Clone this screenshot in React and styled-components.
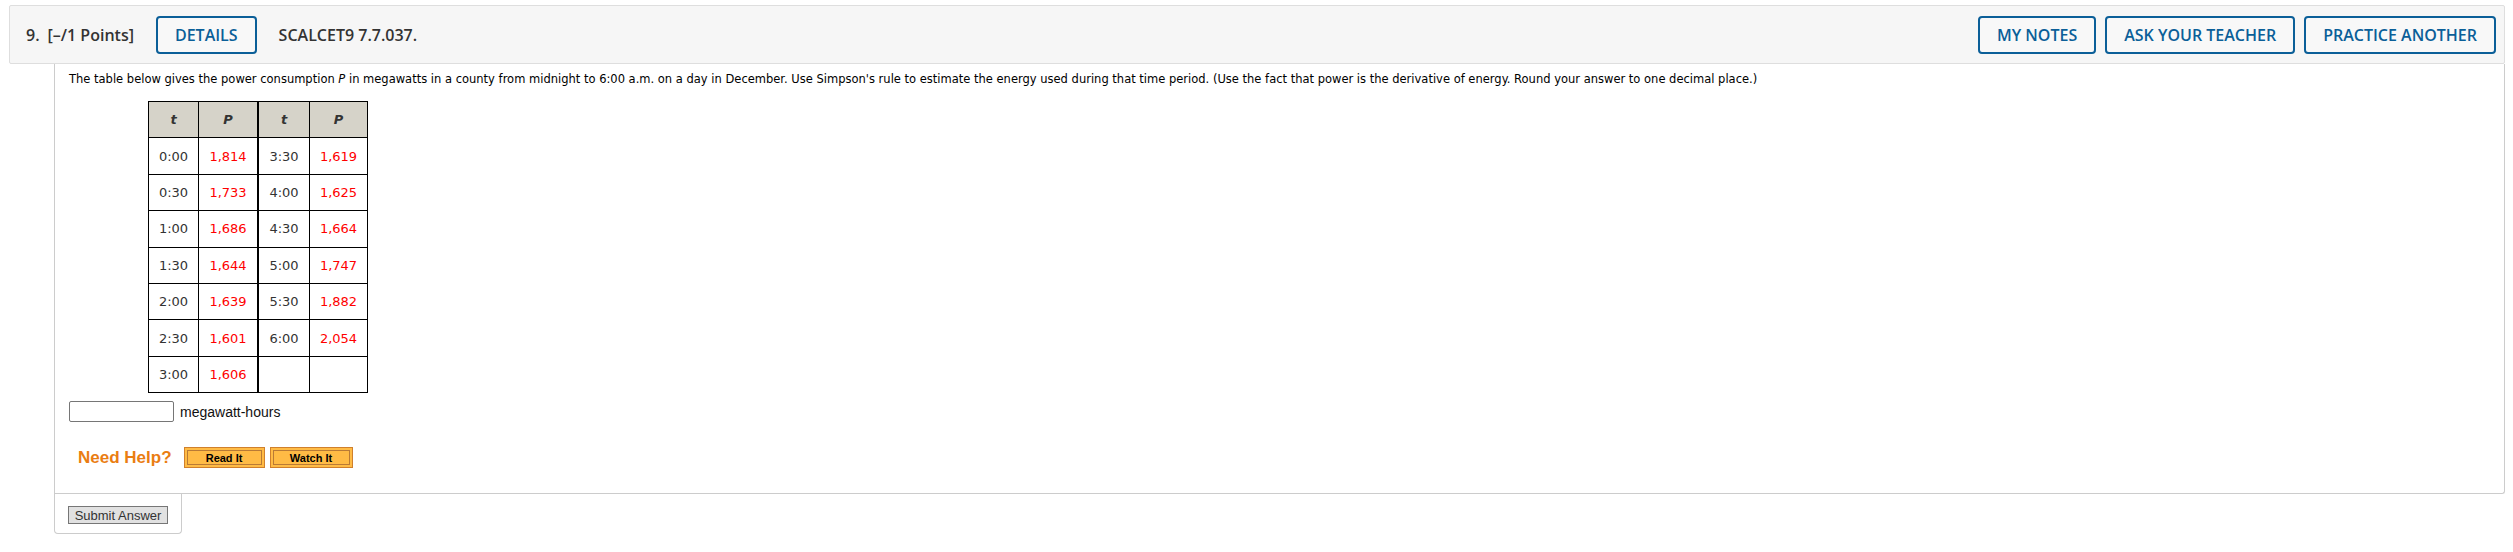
import React from 'react';
import styled, { createGlobalStyle } from 'styled-components';

const GlobalStyle = createGlobalStyle`
  html, body {
    margin: 0;
    padding: 0;
    background: #ffffff;
  }
`;

const rows = [
  ['0:00', '1,814', '3:30', '1,619'],
  ['0:30', '1,733', '4:00', '1,625'],
  ['1:00', '1,686', '4:30', '1,664'],
  ['1:30', '1,644', '5:00', '1,747'],
  ['2:00', '1,639', '5:30', '1,882'],
  ['2:30', '1,601', '6:00', '2,054'],
  ['3:00', '1,606', '', ''],
];

// whole page
const Page = styled.div`
  padding: 5px 8px 0 9px;
`;

// question header bar
const Header = styled.div`
  height: 57px;
  display: flex;
  align-items: center;
  background: #f6f6f6;
  border: 1px solid #dedede;
  border-radius: 2px;
  padding: 0 8px 0 16px;
  font-family: 'Open Sans', 'Liberation Sans', sans-serif;
  font-weight: 600;
  font-size: 16px;
  color: #333333;
`;

const Number = styled.span`
  margin-right: 8px;
`;

const Points = styled.span`
  margin-right: 22px;
`;

const Code = styled.span`
  margin-left: 22px;
`;

const Spacer = styled.div`
  flex: 1;
`;

const ButtonGroup = styled.div`
  display: flex;
  gap: 9px;
`;

const HeaderButton = styled.div`
  box-sizing: border-box;
  height: 38px;
  display: flex;
  align-items: center;
  padding: 0 17px;
  border: 2px solid #0b5f98;
  border-radius: 4px;
  color: #0b5f98;
  background: #f8f8f8;
  font-family: 'Open Sans', 'Liberation Sans', sans-serif;
  font-weight: 600;
  font-size: 16px;
  white-space: nowrap;
`;

// question body
const Body = styled.div`
  margin-left: 45px;
  border: 1px solid #cccccc;
  border-top: none;
  border-bottom-right-radius: 3px;
  padding: 8px 14px 25px 14px;
  font-family: 'DejaVu Sans', Verdana, sans-serif;
  color: #000000;
`;

const Prompt = styled.div`
  font-size: 11.5px;
  line-height: 14px;
  white-space: nowrap;
`;

const Table = styled.table`
  margin: 15px 0 0 79px;
  border-collapse: collapse;
  border: 1px solid #000000;
  font-family: 'DejaVu Sans', Verdana, sans-serif;
  font-size: 13px;
`;

const Th = styled.th`
  width: ${(p) => p.$w}px;
  height: 35.4px;
  padding: 0;
  background: #d6d3c9;
  border: 1px solid #000000;
  border-right-width: ${(p) => (p.$thick ? 2 : 1)}px;
  font-style: italic;
  font-weight: bold;
  color: #333333;
  text-align: center;
`;

const Td = styled.td`
  height: 35.4px;
  padding: 0;
  border: 1px solid #000000;
  border-right-width: ${(p) => (p.$thick ? 2 : 1)}px;
  text-align: center;
  color: ${(p) => (p.$red ? '#ff0000' : '#333333')};
`;

const AnswerRow = styled.div`
  display: flex;
  align-items: center;
  margin-top: 8px;
  gap: 6px;
`;

const AnswerInput = styled.input`
  width: 105px;
  height: 21px;
  box-sizing: border-box;
  border: 1px solid #767676;
  border-radius: 2px;
  margin: 0;
  padding: 0 3px;
`;

const Unit = styled.span`
  font-family: 'Liberation Sans', Arial, sans-serif;
  font-size: 14px;
  color: #111111;
`;

const HelpRow = styled.div`
  display: flex;
  align-items: center;
  margin: 25px 0 0 9px;
`;

const HelpLabel = styled.span`
  font-family: 'Liberation Sans', Arial, sans-serif;
  font-weight: bold;
  font-size: 17px;
  color: #ea7d12;
  margin-right: 12px;
`;

const HelpButton = styled.div`
  width: ${(p) => p.$w}px;
  height: 21px;
  box-sizing: border-box;
  margin-right: 5px;
  padding: 2px;
  border: 1px solid #d0802c;
  background: #ffbb45;
  display: flex;
`;

const HelpInner = styled.div`
  flex: 1;
  border: 1px solid #b97a35;
  display: flex;
  align-items: center;
  justify-content: center;
  font-family: 'Liberation Sans', Arial, sans-serif;
  font-weight: bold;
  font-size: 11px;
  color: #000000;
`;

// submit tab under the body
const SubmitTab = styled.div`
  margin-left: 45px;
  width: 128px;
  height: 40px;
  box-sizing: border-box;
  border: 1px solid #cccccc;
  border-top: none;
  border-radius: 0 0 4px 4px;
  padding: 12px 0 0 13px;
`;

const SubmitButton = styled.div`
  width: 100px;
  height: 18px;
  box-sizing: border-box;
  border: 1px solid #767676;
  background: #e1e1e1;
  display: flex;
  align-items: center;
  justify-content: center;
  font-family: 'Liberation Sans', Arial, sans-serif;
  font-size: 13px;
  color: #333333;
`;

const App = () => (
  <>
    <GlobalStyle />
    <Page>
      <Header>
        <Number>9.</Number>
        <Points>[–/1 Points]</Points>
        <HeaderButton>DETAILS</HeaderButton>
        <Code>SCALCET9 7.7.037.</Code>
        <Spacer />
        <ButtonGroup>
          <HeaderButton>MY NOTES</HeaderButton>
          <HeaderButton>ASK YOUR TEACHER</HeaderButton>
          <HeaderButton>PRACTICE ANOTHER</HeaderButton>
        </ButtonGroup>
      </Header>

      <Body>
        <Prompt>
          The table below gives the power consumption <i>P</i> in megawatts in a county from
          midnight to 6:00 a.m. on a day in December. Use Simpson's rule to estimate the energy
          used during that time period. (Use the fact that power is the derivative of energy.
          Round your answer to one decimal place.)
        </Prompt>

        <Table>
          <thead>
            <tr>
              <Th $w={49}>t</Th>
              <Th $w={58} $thick>P</Th>
              <Th $w={50}>t</Th>
              <Th $w={57}>P</Th>
            </tr>
          </thead>
          <tbody>
            {rows.map((r) => (
              <tr key={r[0]}>
                <Td>{r[0]}</Td>
                <Td $red $thick>{r[1]}</Td>
                <Td>{r[2]}</Td>
                <Td $red>{r[3]}</Td>
              </tr>
            ))}
          </tbody>
        </Table>

        <AnswerRow>
          <AnswerInput type="text" />
          <Unit>megawatt-hours</Unit>
        </AnswerRow>

        <HelpRow>
          <HelpLabel>Need Help?</HelpLabel>
          <HelpButton $w={81}>
            <HelpInner>Read It</HelpInner>
          </HelpButton>
          <HelpButton $w={83}>
            <HelpInner>Watch It</HelpInner>
          </HelpButton>
        </HelpRow>
      </Body>

      <SubmitTab>
        <SubmitButton>Submit Answer</SubmitButton>
      </SubmitTab>
    </Page>
  </>
);

export default App;
